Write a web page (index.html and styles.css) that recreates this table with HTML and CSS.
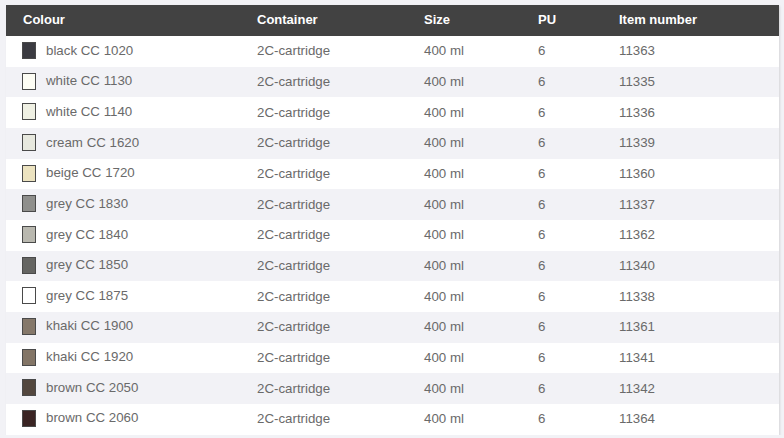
FILE: index.html
```html
<!DOCTYPE html>
<html>
<head>
<meta charset="utf-8">
<link rel="stylesheet" href="styles.css">
</head>
<body>
<div class="wrap">
<table class="products">
<thead>
<tr><th class="c1">Colour</th><th class="c2">Container</th><th class="c3">Size</th><th class="c4">PU</th><th class="c5">Item number</th></tr>
</thead>
<tbody>
<tr><td><span class="sw" style="background:#3b3b41"></span>black CC 1020</td><td>2C-cartridge</td><td>400 ml</td><td>6</td><td>11363</td></tr>
<tr><td><span class="sw" style="background:#fdfdf4"></span>white CC 1130</td><td>2C-cartridge</td><td>400 ml</td><td>6</td><td>11335</td></tr>
<tr><td><span class="sw" style="background:#eff0e3"></span>white CC 1140</td><td>2C-cartridge</td><td>400 ml</td><td>6</td><td>11336</td></tr>
<tr><td><span class="sw" style="background:#e7e8de"></span>cream CC 1620</td><td>2C-cartridge</td><td>400 ml</td><td>6</td><td>11339</td></tr>
<tr><td><span class="sw" style="background:#ece3c0"></span>beige CC 1720</td><td>2C-cartridge</td><td>400 ml</td><td>6</td><td>11360</td></tr>
<tr><td><span class="sw" style="background:#8f8f8c"></span>grey CC 1830</td><td>2C-cartridge</td><td>400 ml</td><td>6</td><td>11337</td></tr>
<tr><td><span class="sw" style="background:#b9b8af"></span>grey CC 1840</td><td>2C-cartridge</td><td>400 ml</td><td>6</td><td>11362</td></tr>
<tr><td><span class="sw" style="background:#656562"></span>grey CC 1850</td><td>2C-cartridge</td><td>400 ml</td><td>6</td><td>11340</td></tr>
<tr><td><span class="sw" style="background:#ffffff"></span>grey CC 1875</td><td>2C-cartridge</td><td>400 ml</td><td>6</td><td>11338</td></tr>
<tr><td><span class="sw" style="background:#85786a"></span>khaki CC 1900</td><td>2C-cartridge</td><td>400 ml</td><td>6</td><td>11361</td></tr>
<tr><td><span class="sw" style="background:#837566"></span>khaki CC 1920</td><td>2C-cartridge</td><td>400 ml</td><td>6</td><td>11341</td></tr>
<tr><td><span class="sw" style="background:#53473e"></span>brown CC 2050</td><td>2C-cartridge</td><td>400 ml</td><td>6</td><td>11342</td></tr>
<tr><td><span class="sw" style="background:#3a2423"></span>brown CC 2060</td><td>2C-cartridge</td><td>400 ml</td><td>6</td><td>11364</td></tr>
</tbody>
</table>
</div>
</body>
</html>
```
FILE: styles.css
```css
html, body {
  margin: 0;
  padding: 0;
  background: #f2f2f6;
}
body {
  font-family: "Liberation Sans", Arial, sans-serif;
}
.wrap {
  padding: 5px 0 0 6px;
}
.products {
  width: 773px;
  border-collapse: collapse;
  table-layout: fixed;
  background: #ffffff;
  box-shadow: 1px 1px 2px rgba(0, 0, 0, 0.12);
}
.products th {
  background: #424242;
  color: #ffffff;
  font-size: 13px;
  font-weight: bold;
  text-align: left;
  height: 31px;
  padding: 0 0 2px 17px;
  box-sizing: border-box;
}
.products .c1 { width: 234px; }
.products .c2 { width: 167px; }
.products .c3 { width: 114px; }
.products .c4 { width: 81px; }
.products td {
  font-size: 13.3px;
  color: #6a6a6a;
  height: 30.67px;
  padding: 0 0 1px 17px;
  box-sizing: border-box;
  vertical-align: middle;
  white-space: nowrap;
}
.products tbody tr:nth-child(even) td {
  background: #f2f2f6;
}
.products td:first-child {
  padding-left: 16px;
}
.sw {
  display: inline-block;
  width: 14px;
  height: 17px;
  box-sizing: border-box;
  border: 1px solid #4a4a4a;
  vertical-align: middle;
  margin: -1px 10px 0 0;
}
```
